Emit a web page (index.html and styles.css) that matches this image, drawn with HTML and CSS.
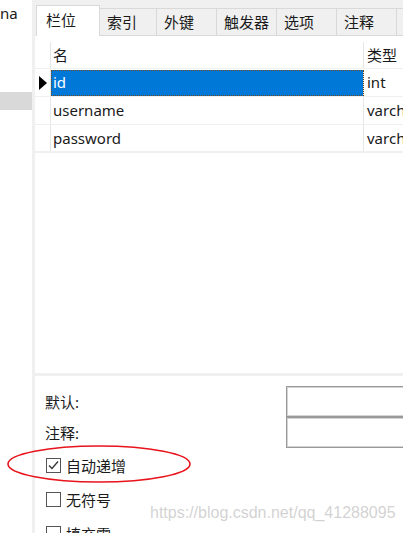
FILE: index.html
```html
<!DOCTYPE html>
<html lang="zh-CN">
<head>
  <meta charset="UTF-8">
  <title>设计表</title>
  <link rel="stylesheet" href="styles.css">
</head>
<body>

  <div class="app">
    <aside class="side">
      <div class="side-item">na</div>
      <div class="side-item side-active"></div>
    </aside>
    <div class="splitter"></div>

    <main class="main">
      <div class="tabs">
        <div class="tab active">栏位</div>
        <div class="tab narrow">索引</div>
        <div class="tab">外键</div>
        <div class="tab">触发器</div>
        <div class="tab">选项</div>
        <div class="tab">注释</div>
        <div class="tab"></div>
      </div>

      <div class="grid">
        <div class="row head">
          <div class="ind"></div>
          <div class="cell name">名</div>
          <div class="cell type">类型</div>
        </div>
        <div class="row">
          <div class="ind">
            <svg width="9" height="14" viewBox="0 0 9 14"><path d="M1 0 L9 7 L1 14 Z" fill="#000"/></svg>
          </div>
          <div class="cell name selected">id</div>
          <div class="cell type">int</div>
        </div>
        <div class="row">
          <div class="ind"></div>
          <div class="cell name">username</div>
          <div class="cell type">varchar</div>
        </div>
        <div class="row">
          <div class="ind"></div>
          <div class="cell name">password</div>
          <div class="cell type">varchar</div>
        </div>
      </div>

      <div class="hsplit"></div>

      <div class="props">
        <div class="field">
          <label>默认:</label>
          <div class="input"></div>
        </div>
        <div class="field">
          <label>注释:</label>
          <div class="input"></div>
        </div>

        <div class="check">
          <span class="box">
            <svg width="13" height="13" viewBox="0 0 13 13"><path d="M2 6.5 L5 9.5 L11 2.5" fill="none" stroke="#333" stroke-width="1.3"/></svg>
          </span>
          自动递增
        </div>
        <div class="check"><span class="box"></span>无符号</div>
        <div class="check"><span class="box"></span>填充零</div>
      </div>
    </main>
  </div>

  <!-- 红圈标注 -->
  <svg class="mark" width="403" height="533" viewBox="0 0 403 533">
    <ellipse cx="99" cy="464" rx="91" ry="18" fill="none" stroke="#e8141c" stroke-width="1.6"/>
  </svg>

  <div class="watermark">https://blog.csdn.net/qq_41288095</div>

</body>
</html>
```

FILE: styles.css
```css
* {
  box-sizing: border-box;
}
body {
  margin: 0;
  font-family: 'Noto Sans', 'Noto Sans CJK SC', sans-serif;
  font-size: 15px;
  color: #1a1a1a;
  background: #fff;
  overflow: hidden;
}
.app {
  display: flex;
  height: 533px;
}

/* 左侧对象列表 */
.side {
  width: 32px;
  padding-top: 4px;
  overflow: hidden;
}
.side-item {
  height: 18px;
  line-height: 18px;
  white-space: nowrap;
}
.side-active {
  margin-top: 70px;
  background: #d9d9d9;
}
.splitter {
  width: 3px;
  background: #f0f0f0;
}

.main {
  flex: 1;
  display: flex;
  flex-direction: column;
  overflow: hidden;
}

/* 选项卡 */
.tabs {
  height: 36px;
  display: flex;
  align-items: flex-end;
  padding-left: 1px;
  background: #f0f0f0;
  flex-shrink: 0;
}
.tab {
  flex-shrink: 0;
  width: 60px;
  height: 28px;
  padding: 0 7px;
  line-height: 26px;
  border: 1px solid #d9d9d9;
  border-left: none;
  white-space: nowrap;
  background: #f0f0f0;
}
.tab.narrow {
  width: 57px;
}
.tab.active {
  width: 64px;
  height: 31px;
  padding-left: 9px;
  line-height: 28px;
  background: #fff;
  border-left: 1px solid #d9d9d9;
  border-bottom: none;
}

/* 字段表格 */
.grid {
  flex: 1;
  padding-top: 6px;
}
.row {
  display: grid;
  grid-template-columns: 16px 313px 1fr;
  height: 28px;
  border-bottom: 1px solid #f0f0f0;
}
.row.head {
  height: 27px;
}
.row:last-child {
  border-bottom: 2px solid #f0f0f0;
}
.ind {
  border-right: 1px solid #e6e6e6;
  display: flex;
  align-items: center;
  padding-left: 3px;
}
.cell {
  line-height: 27px;
  white-space: nowrap;
  overflow: hidden;
}
.head .cell {
  line-height: 26px;
}
.name {
  padding-left: 2px;
  border-right: 1px solid #e6e6e6;
}
.type {
  padding-left: 3px;
}
.selected {
  background: #0078d7;
  color: #fff;
  outline: 1px dotted #6b4a1e;
  outline-offset: -1px;
  margin-top: 1px;
  line-height: 25px;
}

.hsplit {
  height: 3px;
  background: #f0f0f0;
  flex-shrink: 0;
}

/* 字段属性 */
.props {
  height: 157px;
  flex-shrink: 0;
  padding: 10px 0 0 10px;
}
.field {
  display: grid;
  grid-template-columns: 241px 140px;
  align-items: center;
}
.input {
  height: 31px;
  border: 1px solid #999;
  box-shadow: inset 0 0 0 1px #d4d4d4;
  background: #fff;
}
.check {
  display: flex;
  align-items: center;
  gap: 5px;
  height: 34px;
  padding-left: 1px;
}
.box {
  width: 15px;
  height: 15px;
  border: 1px solid #555;
  display: flex;
  align-items: center;
  justify-content: center;
}

.mark {
  position: absolute;
  left: 0;
  top: 0;
  pointer-events: none;
}
.watermark {
  position: absolute;
  left: 150px;
  top: 504px;
  font-family: 'Liberation Sans', sans-serif;
  font-size: 16px;
  color: rgba(180, 180, 180, 0.6);
  white-space: nowrap;
}
```
